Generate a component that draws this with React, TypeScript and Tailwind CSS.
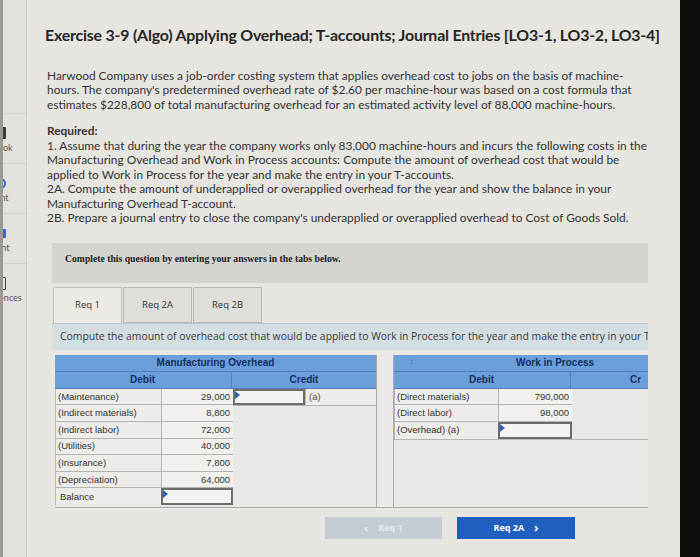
import React from "react";

const moRows: [string, string][] = [
  ["(Maintenance)", "29,000"],
  ["(Indirect materials)", "8,800"],
  ["(Indirect labor)", "72,000"],
  ["(Utilities)", "40,000"],
  ["(Insurance)", "7,800"],
  ["(Depreciation)", "64,000"],
];

const wipRows: [string, string][] = [
  ["(Direct materials)", "790,000"],
  ["(Direct labor)", "98,000"],
];

function Marker() {
  return (
    <span className="absolute left-0 top-0 w-0 h-0 border-t-[4px] border-b-[4px] border-l-[5px] border-t-transparent border-b-transparent border-l-[#2f5fa8]" />
  );
}

function InputCell({ w }: { w: string }) {
  return (
    <div className={`${w} h-full relative border-2 border-[#6d6d6d] bg-[#f3f3f0]`}>
      <Marker />
    </div>
  );
}

function SideItem({ label, icon }: { label: string; icon: React.ReactNode }) {
  return (
    <div className="h-[50px] flex flex-col items-center pt-[13px] border-t border-[#d3d2cd]">
      <div className="h-[12px] flex items-center justify-center">{icon}</div>
      <span className="mt-[3px] whitespace-nowrap text-[9px] leading-[12px] text-[#555] font-['Lato',sans-serif]">{label}</span>
    </div>
  );
}

export default function App() {
  return (
    <div className="w-[700px] h-[557px] overflow-hidden bg-[#e6e5e0] flex relative font-['Lato',sans-serif] text-[#262626]">
      {/* sidebar, partly scrolled off the left edge */}
      <div className="w-[27px] shrink-0 bg-[#e2e1dc] border-r border-[#cfcec9] overflow-hidden relative">
        <div className="absolute left-0 top-0 w-[3px] h-full bg-[#9a9994]" />
        <div className="w-[56px] ml-[-28px] flex flex-col pt-[113px]">
          <SideItem label="eBook" icon={<span className="block w-[12px] h-[12px] bg-[#3b3b3b] rounded-[1px]" />} />
          <SideItem label="Hint" icon={<span className="block w-[11px] h-[11px] rounded-full border-[2px] border-[#2f6bd1]" />} />
          <SideItem label="Print" icon={<span className="block w-[12px] h-[9px] bg-[#2f6bd1] rounded-[1px]" />} />
          <SideItem label="References" icon={<span className="block w-[11px] h-[13px] border-[1.5px] border-[#444] rounded-[1px]" />} />
        </div>
      </div>

      {/* main */}
      <div className="w-[653px] shrink-0 flex flex-col">
        <h1 className="mt-[23px] ml-[18px] text-[15.9px] font-bold tracking-[-0.2px] whitespace-nowrap">
          Exercise 3-9 (Algo) Applying Overhead; T-accounts; Journal Entries [LO3-1, LO3-2, LO3-4]
        </h1>

        <div className="mt-[22px] ml-[20px] w-[610px] text-[11.9px] leading-[14.5px] text-[#333] whitespace-nowrap">
          <p>
            Harwood Company uses a job-order costing system that applies overhead cost to jobs on the basis of machine-
            <br />
            hours. The company's predetermined overhead rate of $2.60 per machine-hour was based on a cost formula that
            <br />
            estimates $228,800 of total manufacturing overhead for an estimated activity level of 88,000 machine-hours.
          </p>
          <p className="mt-[12px] font-bold">Required:</p>
          <p>
            1. Assume that during the year the company works only 83,000 machine-hours and incurs the following costs in the
            <br />
            Manufacturing Overhead and Work in Process accounts: Compute the amount of overhead cost that would be
            <br />
            applied to Work in Process for the year and make the entry in your T-accounts.
          </p>
          <p>
            2A. Compute the amount of underapplied or overapplied overhead for the year and show the balance in your
            <br />
            Manufacturing Overhead T-account.
          </p>
          <p>2B. Prepare a journal entry to close the company's underapplied or overapplied overhead to Cost of Goods Sold.</p>
        </div>

        <div className="mt-[17px] ml-[25px] w-[596px] h-[40px] bg-[#d4d3ce] pt-[9px] pl-[13px]">
          <p className="font-['Liberation_Serif',serif] font-bold text-[9.7px] text-[#222]">
            Complete this question by entering your answers in the tabs below.
          </p>
        </div>

        {/* tabs */}
        <div className="mt-[4px] ml-[26px] flex gap-[1px] h-[36px] font-['Open_Sans',sans-serif] text-[9.5px] text-[#333]">
          <div className="w-[69px] flex items-center justify-center bg-[#ebeae5] border border-[#c2c1bc] border-b-0">Req 1</div>
          <div className="w-[69px] flex items-center justify-center bg-[#dfded9] border border-[#b9b8b3]">Req 2A</div>
          <div className="w-[69px] flex items-center justify-center bg-[#dfded9] border border-[#b9b8b3]">Req 2B</div>
        </div>

        <div className="ml-[25px] w-[596px] h-[27px] bg-[#d3dee3] border-t border-[#b7c3c8] flex items-center pl-[8px] overflow-hidden">
          <p className="whitespace-nowrap font-['Open_Sans',sans-serif] text-[10.4px] text-[#3a3a3a]">
            Compute the amount of overhead cost that would be applied to Work in Process for the year and make the entry in your T
          </p>
        </div>

        {/* T-accounts */}
        <div className="ml-[25px] w-[596px] h-[160px] bg-[#e9e8e4] overflow-hidden pt-[5px] pl-[3px] flex font-['Liberation_Sans',sans-serif] text-[9.5px] text-[#333]">
          {/* Manufacturing Overhead */}
          <div className="w-[322px] shrink-0 h-[153px] border-r border-b border-[#aaa9a5] flex flex-col">
            <div className="h-[17px] bg-[#6b9fdc] border-b border-[#4f7fbd] flex items-center justify-center font-bold text-[10px] text-[#14305a]">
              Manufacturing Overhead
            </div>
            <div className="h-[17px] bg-[#6b9fdc] border-b border-[#4f7fbd] flex font-bold text-[10px] text-[#14305a]">
              <div className="w-[177px] border-r border-[#4f7fbd] flex items-center justify-end pr-[76px]">Debit</div>
              <div className="flex-1 flex items-center justify-center">Credit</div>
            </div>
            <div className="flex">
              <div className="w-[178px] flex flex-col">
                {moRows.map(([l, v]) => (
                  <div key={l} className="h-[16.6px] flex border-b border-[#b5b4b0]">
                    <div className="w-[106px] bg-[#edece8] border-l border-[#b5b4b0] flex items-center pl-[2px]">{l}</div>
                    <div className="flex-1 bg-[#f1f0ec] border-l border-[#b5b4b0] flex items-center justify-end pr-[3px]">{v}</div>
                  </div>
                ))}
                <div className="h-[17px] flex">
                  <div className="w-[106px] bg-[#edece8] border-l border-[#b5b4b0] flex items-center pl-[4px]">Balance</div>
                  <InputCell w="flex-1" />
                </div>
              </div>
              <div className="flex-1 flex flex-col">
                <div className="h-[17px] flex border-b border-[#b5b4b0]">
                  <InputCell w="w-[72px]" />
                  <div className="flex-1 bg-[#edece8] border-l border-[#b5b4b0] flex items-center pl-[3px] text-[#555]">(a)</div>
                </div>
              </div>
            </div>
          </div>

          <div className="w-[17px] shrink-0 h-[153px] border-r border-b border-[#aaa9a5] bg-[#ebeae6]" />

          {/* Work in Process, cut off at the right */}
          <div className="w-[322px] shrink-0 h-[153px] border-b border-[#aaa9a5] flex flex-col">
            <div className="h-[17px] bg-[#6b9fdc] border-b border-[#4f7fbd] flex items-center justify-center font-bold text-[10px] text-[#14305a] relative">
              <span className="absolute left-[17px] top-[3px] text-[6px] text-[#444]">⁝</span>
              Work in Process
            </div>
            <div className="h-[17px] bg-[#6b9fdc] border-b border-[#4f7fbd] flex font-bold text-[10px] text-[#14305a]">
              <div className="w-[177px] border-r border-[#4f7fbd] flex items-center justify-end pr-[76px]">Debit</div>
              <div className="flex-1 flex items-center pl-[59px]">Cr</div>
            </div>
            <div className="w-[178px] flex flex-col">
              {wipRows.map(([l, v]) => (
                <div key={l} className="h-[16.6px] flex border-b border-[#b5b4b0]">
                  <div className="w-[104px] bg-[#edece8] border-l border-[#b5b4b0] flex items-center pl-[2px]">{l}</div>
                  <div className="flex-1 bg-[#f1f0ec] border-l border-[#b5b4b0] flex items-center justify-end pr-[3px]">{v}</div>
                </div>
              ))}
              <div className="h-[17px] flex">
                <div className="w-[104px] bg-[#edece8] border-l border-[#b5b4b0] flex items-center pl-[2px]">(Overhead) (a)</div>
                <InputCell w="flex-1" />
              </div>
            </div>
            <div className="border-b border-[#b5b4b0] w-full" />
          </div>
        </div>

        {/* buttons */}
        <div className="mt-[7px] ml-[298px] flex gap-[15px] font-['Open_Sans',sans-serif] text-[9px] font-bold">
          <div className="w-[117px] h-[22px] bg-[#c4ccd2] flex items-center justify-center gap-[10px] text-[#e7ebee]">
            <span className="text-[11px]">‹</span>
            <span>Req 1</span>
          </div>
          <div className="w-[118px] h-[22px] bg-[#1f5fbf] flex items-center justify-center gap-[10px] text-white">
            <span>Req 2A</span>
            <span className="text-[12px]">›</span>
          </div>
        </div>
      </div>

      {/* right edge */}
      <div className="flex-1 bg-[#0d0d0d]" />
    </div>
  );
}
